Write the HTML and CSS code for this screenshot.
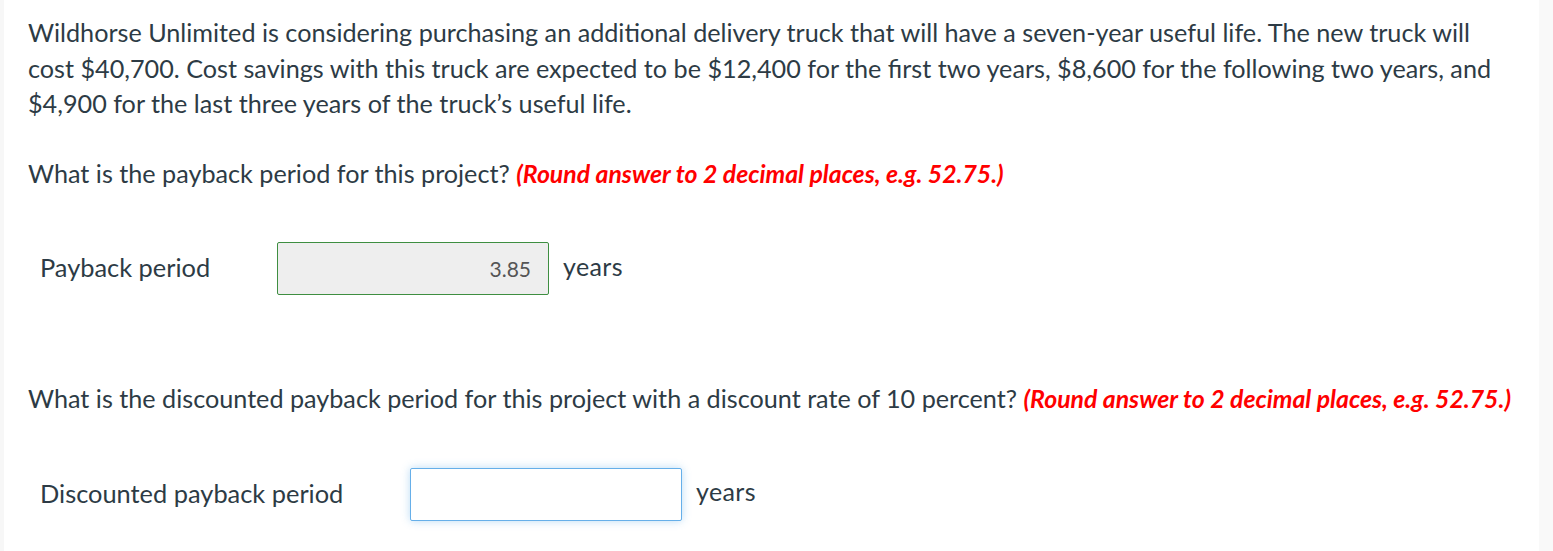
FILE: index.html
```html
<!DOCTYPE html>
<html>
<head>
<meta charset="utf-8">
<link rel="stylesheet" href="styles.css">
</head>
<body>
<div class="page">
  <div class="edge-left"></div>
  <main class="main">
    <p class="intro">Wildhorse Unlimited is considering purchasing an additional delivery truck that will have a seven-year useful life. The new truck will cost $40,700. Cost savings with this truck are expected to be $12,400 for the first two years, $8,600 for the following two years, and $4,900 for the last three years of the truck’s useful life.</p>
    <p class="question q1">What is the payback period for this project? <span class="hint">(Round answer to 2 decimal places, e.g. 52.75.)</span></p>
    <div class="row row1">
      <span class="label label-short">Payback period</span>
      <input class="field field-done" type="text" value="3.85" readonly>
      <span class="unit">years</span>
    </div>
    <p class="question q2">What is the discounted payback period for this project with a discount rate of 10 percent? <span class="hint">(Round answer to 2 decimal places, e.g. 52.75.)</span></p>
    <div class="row row2">
      <span class="label label-long">Discounted payback period</span>
      <input class="field field-focus" type="text" value="">
      <span class="unit">years</span>
    </div>
  </main>
  <div class="edge-right"></div>
</div>
</body>
</html>
```
FILE: styles.css
```css
html, body {
  margin: 0;
  padding: 0;
}
body {
  font-family: Lato, "Open Sans", sans-serif;
  color: #2d3b45;
  background: #f9f9f9;
}
.page {
  display: flex;
  height: 551px;
  overflow: hidden;
}
.edge-left {
  width: 4px;
  background: #f7f7f7;
}
.edge-right {
  width: 14px;
  background: #f9f9f9;
}
.main {
  flex: 1;
  background: #fff;
  padding: 15px 12px 0 24px;
}
.intro, .question {
  margin: 0;
  font-size: 25.2px;
  line-height: 35.5px;
}
.intro {
  margin-right: 30px;
}
.q1 {
  margin-top: 34px;
}
.q2 {
  margin-top: 86px;
}
.hint {
  color: #f00;
  font-weight: 700;
  font-style: italic;
  font-size: 24.8px;
}
.row {
  display: flex;
  align-items: center;
  padding-left: 12px;
  font-size: 25.4px;
}
.row1 {
  margin-top: 51px;
}
.row2 {
  margin-top: 51px;
}
.label {
  margin-top: -3px;
}
.label-short {
  width: 237px;
}
.label-long {
  width: 370px;
}
.field {
  box-sizing: border-box;
  width: 272px;
  height: 53px;
  font-family: Lato, "Open Sans", sans-serif;
  font-size: 21px;
  padding: 0 17px;
  text-align: right;
  border-radius: 2px;
  outline: none;
}
.field-done {
  background: #eeeeee;
  border: 1px solid #3e8e41;
  color: #555;
}
.field-focus {
  background: #fff;
  border: 1px solid #66afe9;
  box-shadow: 0 0 8px rgba(102, 175, 233, 0.45);
}
.unit {
  margin-left: 14px;
  margin-top: -6px;
  font-size: 25px;
  letter-spacing: 0.4px;
}
```
